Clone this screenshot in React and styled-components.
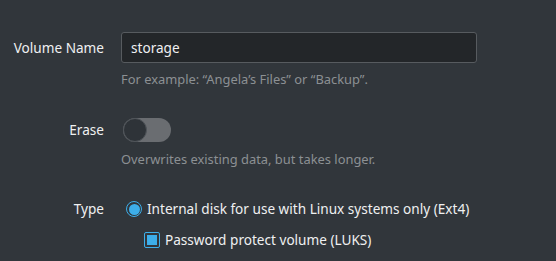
import styled, { createGlobalStyle } from 'styled-components';
import { useState } from 'react';

const GlobalStyle = createGlobalStyle`
  html, body {
    margin: 0;
    padding: 0;
    background: #31363b;
  }
  body {
    font-family: "Noto Sans", "DejaVu Sans", sans-serif;
    color: #eff0f1;
  }
`;

const Page = styled.div`
  width: 556px;
  height: 261px;
  overflow: hidden;
  background: #31363b;
`;

const Form = styled.div`
  display: grid;
  grid-template-columns: 104px 356px;
  column-gap: 17px;
  padding-top: 32px;
  align-items: center;
`;

const Label = styled.div`
  text-align: right;
  font-size: 13.6px;
  line-height: 20px;
  white-space: nowrap;
  color: #eff0f1;
  margin-top: ${(p) => p.$top || 0}px;
`;

const Spacer = styled.div``;

const Entry = styled.input`
  box-sizing: border-box;
  height: 31px;
  width: 100%;
  margin: 0;
  padding: 0 9px;
  background: #232629;
  border: 1px solid #575b5f;
  border-radius: 3px;
  color: #eff0f1;
  font-family: inherit;
  font-size: 13.6px;
  outline: none;
`;

const Hint = styled.div`
  font-size: 12.9px;
  line-height: 17px;
  white-space: nowrap;
  color: #8c9093;
  margin-top: ${(p) => p.$top}px;
`;

const Cell = styled.div`
  margin-top: ${(p) => p.$top || 0}px;
  display: flex;
  align-items: center;
  padding-left: ${(p) => p.$indent || 0}px;
`;

const Switch = styled.button`
  position: relative;
  width: 48px;
  height: 24px;
  margin: 0 0 0 2px;
  padding: 0;
  border: none;
  border-radius: 12px;
  background: ${(p) => (p.$on ? '#3daee9' : '#6a6d71')};
  cursor: pointer;
`;

const Knob = styled.span`
  position: absolute;
  top: 0;
  left: ${(p) => (p.$on ? 24 : 0)}px;
  box-sizing: border-box;
  width: 24px;
  height: 24px;
  border-radius: 50%;
  background: #2e3338;
  border: 1px solid #50555a;
`;

const Choice = styled.label`
  display: flex;
  align-items: center;
  gap: 5px;
  font-size: 13.6px;
  line-height: 20px;
  white-space: nowrap;
  color: #eff0f1;
  cursor: pointer;
`;

const Radio = styled.span`
  box-sizing: border-box;
  flex: none;
  width: 16px;
  height: 16px;
  margin-left: 5px;
  border-radius: 50%;
  border: 1.5px solid #3daee9;
  background: #31363b;
  display: flex;
  align-items: center;
  justify-content: center;
  &::after {
    content: '';
    width: 11px;
    height: 11px;
    border-radius: 50%;
    background: #3daee9;
  }
`;

const Check = styled.span`
  box-sizing: border-box;
  flex: none;
  width: 16px;
  height: 16px;
  border-radius: 2px;
  border: 1.5px solid #3daee9;
  background: #31363b;
  display: flex;
  align-items: center;
  justify-content: center;
  &::after {
    content: '';
    width: 10px;
    height: 10px;
    background: #3daee9;
  }
`;

const App = () => {
  const [name, setName] = useState('storage');
  const [erase, setErase] = useState(false);

  return (
    <Page>
      <GlobalStyle />
      <Form>
        <Label>Volume Name</Label>
        <Entry value={name} onChange={(e) => setName(e.target.value)} />

        <Spacer />
        <Hint $top={8}>For example: “Angela’s Files” or “Backup”.</Hint>

        <Label $top={30}>Erase</Label>
        <Cell $top={30}>
          <Switch $on={erase} onClick={() => setErase(!erase)}>
            <Knob $on={erase} />
          </Switch>
        </Cell>

        <Spacer />
        <Hint $top={9}>Overwrites existing data, but takes longer.</Hint>

        <Label $top={31}>Type</Label>
        <Cell $top={31}>
          <Choice>
            <Radio />
            Internal disk for use with Linux systems only (Ext4)
          </Choice>
        </Cell>

        <Spacer />
        <Cell $top={11} $indent={23}>
          <Choice>
            <Check />
            Password protect volume (LUKS)
          </Choice>
        </Cell>
      </Form>
    </Page>
  );
};

export default App;
